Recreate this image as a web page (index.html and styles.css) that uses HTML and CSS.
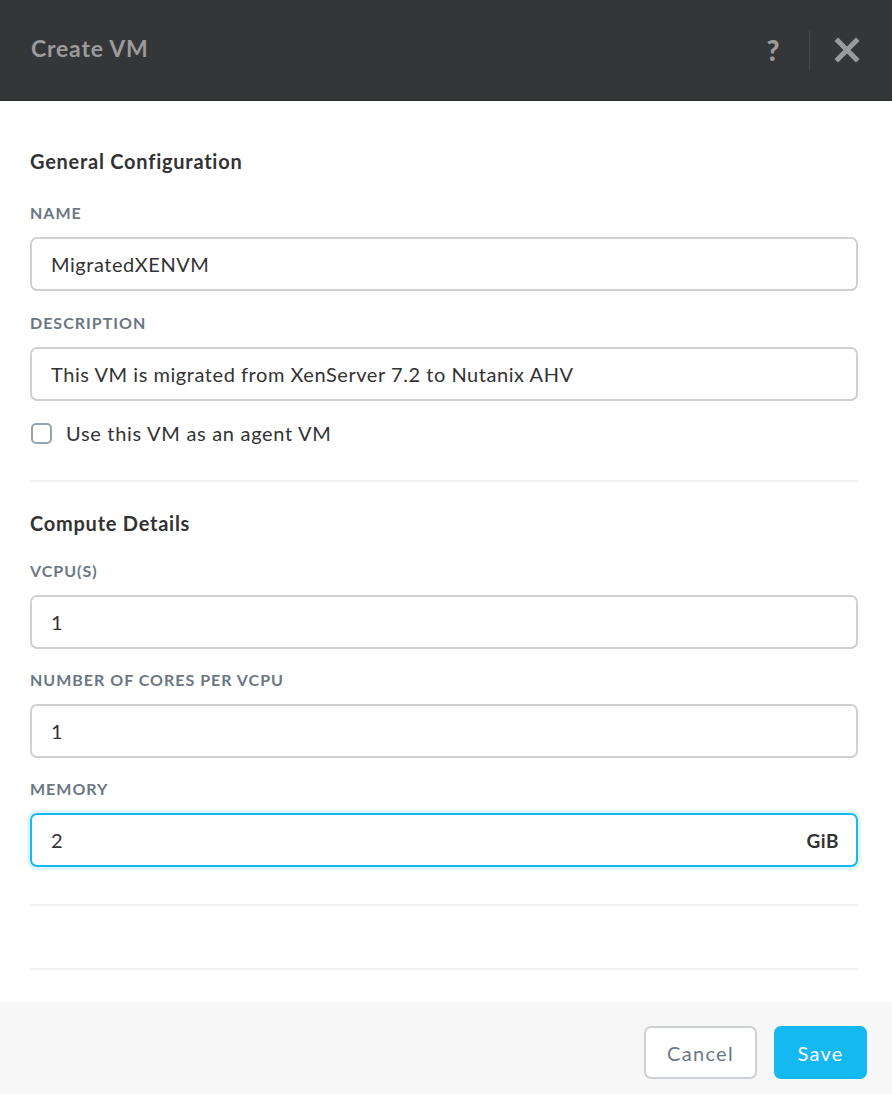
FILE: index.html
```html
<!DOCTYPE html>
<html>
<head>
<meta charset="utf-8">
<link rel="stylesheet" href="styles.css">
</head>
<body>
<div class="modal">
  <header class="modal-header">
    <h1 class="modal-title">Create VM</h1>
    <div class="header-actions">
      <span class="help-icon">?</span>
      <span class="header-sep"></span>
      <svg class="close-icon" width="26" height="26" viewBox="0 0 26 26"><path d="M4 4 L22 22 M22 4 L4 22" stroke="#9b9b9b" stroke-width="5" stroke-linecap="square"/></svg>
    </div>
  </header>
  <main class="modal-body">
    <section class="section section-general">
      <h2 class="section-title">General Configuration</h2>
      <div class="field">
        <label class="field-label">NAME</label>
        <div class="input">MigratedXENVM</div>
      </div>
      <div class="field field-desc">
        <label class="field-label">DESCRIPTION</label>
        <div class="input">This VM is migrated from XenServer 7.2 to Nutanix AHV</div>
      </div>
      <div class="check-row">
        <span class="checkbox"></span>
        <span class="check-label">Use this VM as an agent VM</span>
      </div>
    </section>
    <section class="section section-compute">
      <h2 class="section-title">Compute Details</h2>
      <div class="field">
        <label class="field-label">VCPU(S)</label>
        <div class="input">1</div>
      </div>
      <div class="field">
        <label class="field-label">NUMBER OF CORES PER VCPU</label>
        <div class="input">1</div>
      </div>
      <div class="field">
        <label class="field-label">MEMORY</label>
        <div class="input input-focus"><span>2</span><span class="unit">GiB</span></div>
      </div>
    </section>
    <div class="empty-section"></div>
  </main>
  <footer class="modal-footer">
    <button class="btn btn-cancel">Cancel</button>
    <button class="btn btn-save">Save</button>
  </footer>
</div>
</body>
</html>
```
FILE: styles.css
```css
* { box-sizing: border-box; }
html, body { margin: 0; padding: 0; }
body {
  font-family: "Lato", "Open Sans", sans-serif;
  background: #ffffff;
  color: #333;
  width: 892px;
  height: 1094px;
  overflow: hidden;
}
.modal {
  display: flex;
  flex-direction: column;
  height: 1094px;
}
.modal-header {
  flex: none;
  height: 101px;
  background: #353638;
  border-bottom: 1px solid #2c2d2f;
  display: flex;
  align-items: center;
  justify-content: space-between;
  padding: 0 32px 4px 31px;
}
.modal-title {
  margin: 0;
  font-size: 23px;
  font-weight: 700;
  color: #9b9b9b;
  letter-spacing: 0.8px;
}
.header-actions {
  display: flex;
  align-items: center;
  padding-top: 4px;
}
.help-icon {
  font-size: 28px;
  font-weight: 900;
  color: #9b9b9b;
  width: 20px;
  text-align: center;
  line-height: 1;
}
.header-sep {
  width: 1px;
  height: 40px;
  background: #444547;
  margin: 0 24px 0 26px;
}
.close-icon { display: block; }
.modal-body {
  flex: 1;
  padding: 0 34px 0 30px;
}
.section {
  border-bottom: 2px solid #f1f1f1;
}
.section-general {
  padding-top: 48px;
  padding-bottom: 35px;
}
.section-general .field { margin-bottom: 22px; }
.section-general .field-desc { margin-bottom: 20px; }
.section-compute {
  padding-top: 29px;
  padding-bottom: 37px;
}
.section-title {
  margin: 0 0 30px;
  font-size: 20px;
  line-height: 24px;
  font-weight: 700;
  color: #333;
  letter-spacing: 0.75px;
}
.section-compute .section-title { margin-bottom: 26px; }
.field { margin-bottom: 21px; }
.field-label {
  display: block;
  font-size: 16px;
  line-height: 20px;
  font-weight: 700;
  color: #6c7782;
  margin-bottom: 14px;
  letter-spacing: 1px;
}
.input {
  height: 54px;
  border: 2px solid #d0d0d0;
  border-radius: 7px;
  padding: 0 19px;
  display: flex;
  align-items: center;
  justify-content: space-between;
  font-size: 20px;
  letter-spacing: 0.55px;
  color: #333;
}
.input-focus {
  border-color: #15b9f1;
  box-shadow: 0 0 0 3px #e1f5fc;
}
.unit {
  font-weight: 700;
  font-size: 19px;
  color: #333;
  margin-right: -2px;
}
.check-row {
  display: flex;
  align-items: center;
}
.checkbox {
  width: 21px;
  height: 21px;
  border: 2px solid #98a2ac;
  border-radius: 5px;
  margin-left: 1px;
  margin-right: 14px;
}
.check-label {
  font-size: 20px;
  letter-spacing: 0.7px;
  color: #333;
}
.section-compute .field:last-child { margin-bottom: 0; }
.empty-section {
  height: 64px;
  border-bottom: 2px solid #f1f1f1;
}
.modal-footer {
  flex: none;
  height: 92px;
  background: #f7f7f7;
  display: flex;
  align-items: flex-start;
  justify-content: flex-end;
  padding: 24px 25px 0 0;
  gap: 17px;
}
.btn {
  height: 53px;
  border-radius: 7px;
  font-family: inherit;
  font-size: 20px;
  letter-spacing: 1.3px;
  padding: 0;
  cursor: pointer;
}
.btn-cancel {
  width: 113px;
  background: #fff;
  border: 2px solid #cdd1d5;
  color: #6c7782;
}
.btn-save {
  width: 93px;
  background: #15b9f1;
  border: none;
  color: #fff;
}
```
